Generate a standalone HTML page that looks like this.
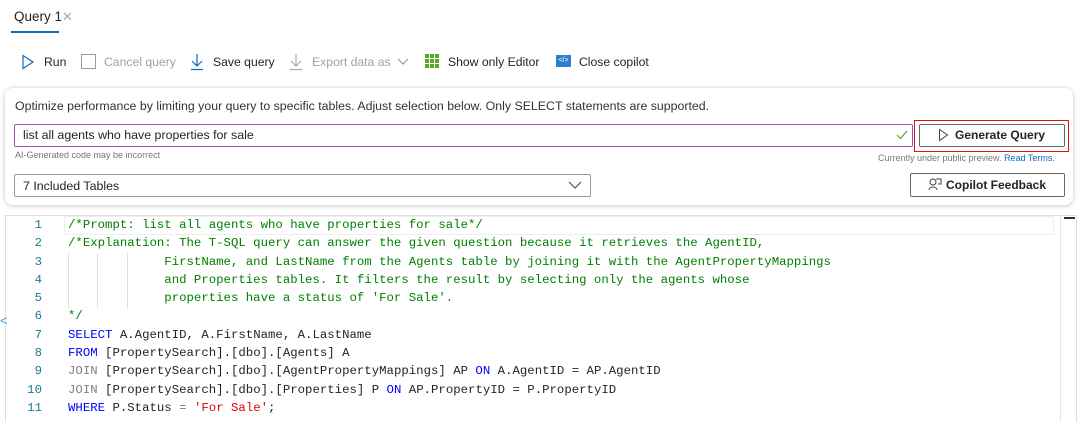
<!DOCTYPE html>
<html><head><meta charset="utf-8"><style>
*{box-sizing:border-box;margin:0;padding:0}
body{width:1080px;height:422px;overflow:hidden;background:#fff;font-family:"Liberation Sans",sans-serif;color:#242424;position:relative}
.abs{position:absolute}
.tb{font-size:12.2px;white-space:nowrap}
.dis{color:#a0a0a0}
.card{left:5px;top:88px;width:1068px;height:117px;background:#fff;border-radius:8px;box-shadow:0 0 4px rgba(0,0,0,.18),0 2px 6px rgba(0,0,0,.08)}
.code{font-family:"Liberation Mono",monospace;font-size:12.35px;white-space:pre;line-height:18.3px}
.ln{width:42px;text-align:right;color:#237893}
.c{color:#008000}.k{color:#0000ff}.g{color:#808080}.s{color:#e00000}
</style></head><body>
<div class="abs" style="left:14px;top:9px;font-size:13.5px;white-space:nowrap">Query 1<span style="color:#aaa;font-size:13px">✕</span></div>
<div class="abs" style="left:11px;top:31px;width:48px;height:2px;background:#0f6cbd"></div>

<svg class="abs" style="left:21px;top:54px" width="14" height="16"><path d="M2 1.5 L12 8 L2 14.5 Z" fill="none" stroke="#0f6cbd" stroke-width="1.2"/></svg>
<div class="abs tb" style="left:44px;top:55px">Run</div>
<div class="abs" style="left:81px;top:54px;width:15px;height:15px;border:1px solid #999"></div>
<div class="abs tb dis" style="left:104px;top:55px">Cancel query</div>
<svg class="abs" style="left:190px;top:53px" width="14" height="18"><path d="M7 1 V13 M2 8 L7 13 L12 8 M1 16.5 H13" fill="none" stroke="#0f6cbd" stroke-width="1.2"/></svg>
<div class="abs tb" style="left:213px;top:55px">Save query</div>
<svg class="abs" style="left:289px;top:53px" width="14" height="18"><path d="M7 1 V13 M2 8 L7 13 L12 8 M1 16.5 H13" fill="none" stroke="#aaa" stroke-width="1.2"/></svg>
<div class="abs tb dis" style="left:312px;top:55px">Export data as</div>
<svg class="abs" style="left:397px;top:58px" width="12" height="8"><path d="M1 1 L6 6 L11 1" fill="none" stroke="#999" stroke-width="1.2"/></svg>
<svg class="abs" style="left:425px;top:54px" width="15" height="15"><g fill="#5aa82a"><rect x="0" y="0" width="4" height="4"/><rect x="5" y="0" width="4" height="4"/><rect x="10" y="0" width="4" height="4"/><rect x="0" y="5" width="4" height="4"/><rect x="5" y="5" width="4" height="4"/><rect x="10" y="5" width="4" height="4"/><rect x="0" y="10" width="4" height="4"/><rect x="5" y="10" width="4" height="4"/><rect x="10" y="10" width="4" height="4"/></g></svg>
<div class="abs tb" style="left:448px;top:55px">Show only Editor</div>
<div class="abs" style="left:556px;top:55px;width:15px;height:12px;background:#2a7fd4;color:#fff;font-size:7px;text-align:center;line-height:12px">&lt;/&gt;</div>
<div class="abs tb" style="left:579px;top:55px">Close copilot</div>

<div class="abs card"></div>
<div class="abs" style="left:15px;top:99px;color:#333;font-size:12.35px;white-space:nowrap">Optimize performance by limiting your query to specific tables. Adjust selection below. Only SELECT statements are supported.</div>
<div class="abs" style="left:14px;top:124px;width:899px;height:23px;border:1px solid #a24ec0;border-radius:2px"></div>
<div class="abs" style="left:23px;top:128px;font-size:12.4px;white-space:nowrap">list all agents who have properties for sale</div>
<svg class="abs" style="left:896px;top:130px" width="12" height="10"><path d="M1 5 L4.5 8.5 L11 1" fill="none" stroke="#5aa82a" stroke-width="1.2"/></svg>
<div class="abs" style="left:914px;top:120px;width:155px;height:32px;border:1.5px solid #e01010"></div>
<div class="abs" style="left:919px;top:124px;width:146px;height:23px;border:1px solid #666;border-radius:2px"></div>
<svg class="abs" style="left:938px;top:128px" width="11" height="14"><path d="M1.5 1.5 L9.5 7 L1.5 12.5 Z" fill="none" stroke="#444" stroke-width="1"/></svg>
<div class="abs" style="left:955px;top:128px;font-weight:bold;font-size:12px;white-space:nowrap">Generate Query</div>
<div class="abs" style="left:15px;top:150px;font-size:9px;color:#777;white-space:nowrap">AI-Generated code may be incorrect</div>
<div class="abs" style="left:878px;top:153px;font-size:9px;color:#777;white-space:nowrap">Currently under public preview. <span style="color:#0f6cbd">Read Terms.</span></div>
<div class="abs" style="left:14px;top:174px;width:577px;height:23px;border:1px solid #999;border-radius:2px"></div>
<div class="abs" style="left:23px;top:179px;font-size:12.4px;white-space:nowrap">7 Included Tables</div>
<svg class="abs" style="left:568px;top:181px" width="14" height="9"><path d="M1 1 L7 7 L13 1" fill="none" stroke="#555" stroke-width="1.2"/></svg>
<div class="abs" style="left:910px;top:173px;width:155px;height:24px;border:1px solid #666;border-radius:2px"></div>
<svg class="abs" style="left:928px;top:177px" width="14" height="14"><circle cx="5" cy="5" r="3" fill="none" stroke="#444"/><path d="M1 13 C1 9 9 9 9 13 M8 2 H13 V7 H10" fill="none" stroke="#444"/></svg>
<div class="abs" style="left:946px;top:178px;font-weight:bold;font-size:12px;white-space:nowrap">Copilot Feedback</div>

<div class="abs" style="left:5px;top:215px;width:1072px;height:207px;border:1px solid #ddd;border-bottom:none"></div>
<div class="abs" style="left:1060px;top:216px;width:16px;height:206px;border-left:1px solid #e5e5e5"></div>
<div class="abs" style="left:1064px;top:217px;width:11px;height:2px;background:#333"></div>
<div class="abs" style="left:64px;top:216px;width:990px;height:19px;border:1px solid #eee"></div>
<div class="abs" style="left:0px;top:313px;color:#3c9ad8;font-size:13px">&lt;</div>
<div class="abs" style="left:68px;top:253px;width:1px;height:55px;background:#ddd"></div>
<div class="abs" style="left:97px;top:253px;width:1px;height:55px;background:#ddd"></div>
<div class="abs" style="left:127px;top:253px;width:1px;height:55px;background:#ddd"></div>
<div class="abs code ln" style="left:0;top:216px">1
2
3
4
5
6
7
8
9
10
11</div>
<div class="abs code" style="left:68px;top:216px"><span class="c">/*Prompt: list all agents who have properties for sale*/
/*Explanation: The T-SQL query can answer the given question because it retrieves the AgentID,
             FirstName, and LastName from the Agents table by joining it with the AgentPropertyMappings
             and Properties tables. It filters the result by selecting only the agents whose
             properties have a status of 'For Sale'.
*/</span>
<span class="k">SELECT</span> A.AgentID, A.FirstName, A.LastName
<span class="k">FROM</span> [PropertySearch].[dbo].[Agents] A
<span class="g">JOIN</span> [PropertySearch].[dbo].[AgentPropertyMappings] AP <span class="k">ON</span> A.AgentID = AP.AgentID
<span class="g">JOIN</span> [PropertySearch].[dbo].[Properties] P <span class="k">ON</span> AP.PropertyID = P.PropertyID
<span class="k">WHERE</span> P.Status <span class="g">=</span> <span class="s">'For Sale'</span>;</div>
</body></html>
